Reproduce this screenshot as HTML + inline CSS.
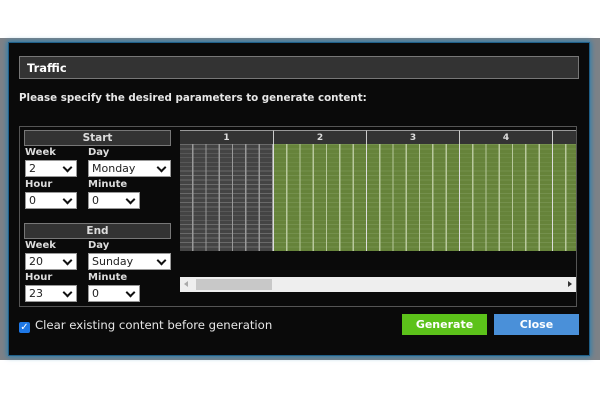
<!DOCTYPE html>
<html><head><style>
body{margin:0;width:600px;height:405px;background:#fff;position:relative;overflow:hidden;font-family:"DejaVu Sans","Liberation Sans",sans-serif;}
.bg{position:absolute;left:0;top:38px;width:600px;height:322px;background:#7d8287;}
.dlg{position:absolute;left:8px;top:42px;width:580px;height:312px;background:#0a0a0a;border:1px solid #1f5f88;box-shadow:0 0 5px 1px #2a7fb0;}
.a{position:absolute;}
.title{left:19px;top:56px;width:560px;height:23px;background:#333;border:1px solid #777;color:#fff;font-weight:bold;font-size:11.5px;line-height:23px;padding-left:7px;box-sizing:border-box;}
.txt{color:#e6e6e6;font-size:10.3px;font-weight:bold;}
.panel{left:19px;top:126px;width:558px;height:181px;border:1px solid #555;box-sizing:border-box;}
.hdr{background:#333;border:1px solid #777;color:#ddd;font-weight:bold;font-size:10.5px;text-align:center;box-sizing:border-box;line-height:14px;}
.lbl{color:#ddd;font-size:10px;font-weight:bold;}
.sel{background:#fff;border:1px solid #999;box-sizing:border-box;height:17px;font-size:11px;color:#222;line-height:15px;padding-left:3px;}
.sel:after{content:"";position:absolute;right:5px;top:3px;width:5px;height:5px;border-right:2px solid #111;border-bottom:2px solid #111;transform:rotate(45deg);}
.gh{top:130px;height:14px;background:#333;border-right:1px solid #ccc;border-top:1px solid #999;color:#ddd;font-size:9px;font-weight:bold;text-align:center;line-height:14px;box-sizing:border-box;}
.gb{top:144px;height:107px;box-sizing:border-box;border-right:1px solid #ddd;}
.dark{background:repeating-linear-gradient(90deg,transparent 0 12px,#999 12px 13.3px),repeating-linear-gradient(0deg,#444 0 3.6px,#6a6a6a 3.6px 4.46px);}
.green{background:repeating-linear-gradient(90deg,transparent 0 12px,#b8c89c 12px 13.3px),repeating-linear-gradient(0deg,#66833a 0 3.6px,#74904c 3.6px 4.46px);}
.btn{top:314px;height:21px;width:85px;color:#fff;font-size:11px;font-weight:bold;text-align:center;line-height:21px;}
</style></head><body>
<div class="bg"></div>
<div class="dlg"></div>
<div class="a title">Traffic</div>
<div class="a txt" style="left:19px;top:92px;">Please specify the desired parameters to generate content:</div>
<div class="a panel"></div>
<div class="a hdr" style="left:24px;top:130px;width:147px;height:16px;">Start</div>
<div class="a lbl" style="left:25px;top:147px;">Week</div>
<div class="a lbl" style="left:88px;top:147px;">Day</div>
<div class="a sel" style="left:25px;top:160px;width:52px;">2</div>
<div class="a sel" style="left:88px;top:160px;width:83px;">Monday</div>
<div class="a lbl" style="left:25px;top:179px;">Hour</div>
<div class="a lbl" style="left:88px;top:179px;">Minute</div>
<div class="a sel" style="left:25px;top:192px;width:52px;">0</div>
<div class="a sel" style="left:88px;top:192px;width:52px;">0</div>
<div class="a hdr" style="left:24px;top:223px;width:147px;height:16px;">End</div>
<div class="a lbl" style="left:25px;top:240px;">Week</div>
<div class="a lbl" style="left:88px;top:240px;">Day</div>
<div class="a sel" style="left:25px;top:253px;width:52px;">20</div>
<div class="a sel" style="left:88px;top:253px;width:83px;">Sunday</div>
<div class="a lbl" style="left:25px;top:272px;">Hour</div>
<div class="a lbl" style="left:88px;top:272px;">Minute</div>
<div class="a sel" style="left:25px;top:285px;width:52px;">23</div>
<div class="a sel" style="left:88px;top:285px;width:52px;">0</div>

<div class="a gh" style="left:180px;width:94px;">1</div>
<div class="a gh" style="left:274px;width:93px;">2</div>
<div class="a gh" style="left:367px;width:93px;">3</div>
<div class="a gh" style="left:460px;width:93px;">4</div>
<div class="a gh" style="left:553px;width:23px;border-right:none;"></div>
<div class="a gb dark" style="left:180px;width:94px;"></div>
<div class="a gb green" style="left:274px;width:93px;"></div>
<div class="a gb green" style="left:367px;width:93px;"></div>
<div class="a gb green" style="left:460px;width:93px;"></div>
<div class="a gb green" style="left:553px;width:23px;border-right:none;"></div>

<div class="a" style="left:180px;top:277px;width:396px;height:15px;background:#eee;"></div>
<div class="a" style="left:196px;top:279px;width:76px;height:11px;background:#c8c8c8;"></div>
<div class="a" style="left:184px;top:281px;width:0;height:0;border:3px solid transparent;border-right:4px solid #aaa;border-left:none;"></div>
<div class="a" style="left:568px;top:281px;width:0;height:0;border:3px solid transparent;border-left:4px solid #333;border-right:none;"></div>

<div class="a" style="left:19px;top:322px;width:11px;height:11px;background:#1e78e6;border-radius:2px;color:#fff;font-size:10px;line-height:11px;text-align:center;">✓</div>
<div class="a" style="left:35px;top:318px;color:#e6e6e6;font-size:11.7px;">Clear existing content before generation</div>
<div class="a btn" style="left:402px;background:#5cc21a;">Generate</div>
<div class="a btn" style="left:494px;background:#4a90d9;">Close</div>
</body></html>
